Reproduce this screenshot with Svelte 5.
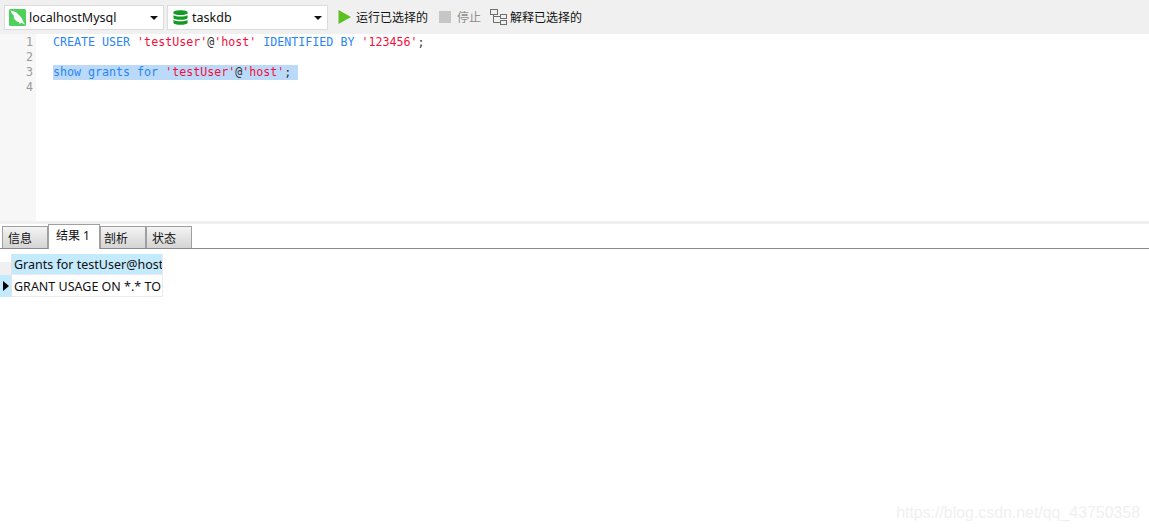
<script lang="ts">
  const tabs = ['信息', '结果 1', '剖析', '状态'];
  const activeTab = 1;
  const lineNumbers = [1, 2, 3, 4];
</script>

<div class="app">
  <div class="toolbar">
    <div class="select conn">
      <svg class="ico" viewBox="0 0 16 16" width="17" height="17">
        <rect x="0" y="0" width="16" height="16" rx="1.5" fill="#4fd05a" />
        <path d="M1.5 1.5 C4.5 2 7 3 8.5 5 C10.5 6.5 12.5 9 13 11 L15 14.5 L11.5 13 L10 14 L9.5 12.5 C7.5 12 6 11 5.2 9.5 C4.5 8.3 4.3 7 4.6 6 C3.2 5 2 3.5 1.5 1.5 Z" fill="#fff" />
      </svg>
      <span class="label">localhostMysql</span>
      <span class="arrow"></span>
    </div>
    <div class="select db">
      <svg class="ico" viewBox="0 0 16 17" width="15" height="17">
        <path d="M0.5 3 C0.5 0 15.5 0 15.5 3 L15.5 4 C15.5 6.6 0.5 6.6 0.5 4 Z" fill="#129a23" />
        <path d="M0.5 6.2 C3 8 13 8 15.5 6.2 L15.5 9 C15.5 11.6 0.5 11.6 0.5 9 Z" fill="#129a23" />
        <path d="M0.5 11.2 C3 13 13 13 15.5 11.2 L15.5 14 C15.5 17 0.5 17 0.5 14 Z" fill="#129a23" />
      </svg>
      <span class="label">taskdb</span>
      <span class="arrow"></span>
    </div>
    <div class="tool run">
      <svg viewBox="0 0 14 14" width="14" height="14"><path d="M0.5 0 L13 7 L0.5 14 Z" fill="#5cc022" /></svg>
      <span>运行已选择的</span>
    </div>
    <div class="tool stop">
      <span class="stop-box"></span>
      <span>停止</span>
    </div>
    <div class="tool explain">
      <svg viewBox="0 0 17 16" width="17" height="16" fill="none" stroke="#6e6e6e">
        <rect x="0.5" y="0.5" width="7" height="5" />
        <rect x="10.5" y="5.5" width="6" height="4" />
        <rect x="10.5" y="11.5" width="6" height="4" />
        <path d="M3.5 5.5 V13.5 H10.5 M3.5 7.5 H10.5" />
      </svg>
      <span>解释已选择的</span>
    </div>
  </div>

  <div class="editor">
    <div class="gutter">
      {#each lineNumbers as n}
        <div class="num">{n}</div>
      {/each}
    </div>
    <div class="code">
      <div class="line"><span class="kw">CREATE USER</span> <span class="str">'testUser'</span>@<span class="str">'host'</span> <span class="kw">IDENTIFIED BY</span> <span class="str">'123456'</span>;</div>
      <div class="line"></div>
      <div class="line"><span class="sel"><span class="kw">show grants for</span> <span class="str">'testUser'</span>@<span class="str">'host'</span>;{' '}</span></div>
      <div class="line"></div>
    </div>
  </div>

  <div class="splitter"></div>

  <div class="tabs">
    {#each tabs as t, i}
      <div class="tab" class:active={i === activeTab}>{t}</div>
    {/each}
  </div>

  <div class="results">
    <div class="row head">
      <div class="indicator"></div>
      <div class="cell">Grants for testUser@host</div>
    </div>
    <div class="row body">
      <div class="indicator"><span class="pointer"></span></div>
      <div class="cell">GRANT USAGE ON *.* TO</div>
    </div>
  </div>

  <div class="watermark">https://blog.csdn.net/qq_43750358</div>
</div>

<style>
  :global(body) {
    margin: 0;
    background: #fff;
  }

  .app {
    position: relative;
    width: 1149px;
    height: 531px;
    overflow: hidden;
    font-family: "Noto Sans", "Noto Sans CJK SC", sans-serif;
    font-size: 12.5px;
    color: #111;
  }

  .toolbar {
    display: flex;
    align-items: center;
    height: 34px;
    padding-left: 4px;
    box-sizing: border-box;
    background: #f0f0f0;
  }

  .select {
    display: flex;
    align-items: center;
    box-sizing: border-box;
    height: 25px;
    padding: 0 5px 0 4px;
    gap: 3px;
    background: #fff;
    border: 1px solid #dcdcdc;
  }
  .conn { width: 160px; margin-right: 3px; }
  .db { width: 161px; margin-right: 10px; padding-left: 5px; gap: 4px; }
  .label { flex: 1; }
  .ico { flex: none; }

  .arrow {
    width: 0;
    height: 0;
    border-left: 4px solid transparent;
    border-right: 4px solid transparent;
    border-top: 4px solid #111;
    margin-top: 2px;
  }

  .tool {
    display: flex;
    align-items: center;
    gap: 4px;
    font-size: 12px;
  }
  .run { margin-right: 11px; }
  .stop { margin-right: 9px; color: #8c8c8c; gap: 6px; }
  .explain { gap: 3px; }

  .stop-box {
    width: 12px;
    height: 12px;
    background: #c6c6c6;
  }

  .editor {
    display: flex;
    height: 187px;
    font-family: "DejaVu Sans Mono", monospace;
    font-size: 11.65px;
    line-height: 15px;
    background: #fff;
  }

  .gutter {
    width: 36px;
    box-sizing: border-box;
    padding: 1px 3px 0 0;
    background: #f7f7f7;
    color: #9a9a9a;
    text-align: right;
  }
  .num { height: 15px; }

  .code {
    padding: 1px 0 0 17px;
    color: #333;
  }
  .line { height: 15px; white-space: pre; }
  .kw { color: #2a86f5; }
  .str { color: #f5103c; }
  .sel { background: #bbdafa; display: inline-block; height: 15px; }

  .splitter {
    height: 3px;
    background: #f0f0f0;
  }

  .tabs {
    display: flex;
    align-items: flex-end;
    height: 25px;
    box-sizing: border-box;
    padding-left: 2px;
    border-bottom: 1px solid #8a8a8a;
  }

  .tab {
    box-sizing: border-box;
    width: 46px;
    height: 22px;
    padding: 3px 0 0 5px;
    border: 1px solid #a0a0a0;
    border-bottom: 0;
    background: linear-gradient(#f4f4f4, #d4d4d4);
    font-size: 12px;
    line-height: 17px;
  }
  .tab:nth-child(3) { padding-left: 3px; }
  .tab.active {
    width: 52px;
    height: 25px;
    margin-bottom: -1px;
    padding: 2px 0 0 7px;
    background: #fff;
    position: relative;
  }

  .results {
    margin-top: 5px;
    width: 163px;
    overflow: hidden;
  }

  .row {
    display: flex;
    height: 22px;
  }
  .head { height: 21px; }
  .indicator {
    flex: none;
    width: 12px;
    display: flex;
    align-items: center;
    box-sizing: border-box;
    border-right: 1px solid #e4e4e4;
  }
  .head .indicator { background: linear-gradient(#fff 8px, #f0f0f0 8px); }
  .body .indicator { background: #c4eafd; }

  .pointer {
    width: 0;
    height: 0;
    margin-left: 3px;
    border-top: 5.5px solid transparent;
    border-bottom: 5.5px solid transparent;
    border-left: 6px solid #000;
  }

  .cell {
    flex: 1;
    min-width: 0;
    padding-left: 2px;
    white-space: nowrap;
    overflow: hidden;
    line-height: 21px;
    border-right: 1px solid #eaeaea;
    border-bottom: 1px solid #eaeaea;
  }
  .body .cell { line-height: 23px; }
  .head .cell { background: #c4eafd; }

  .watermark {
    position: absolute;
    right: 9px;
    bottom: 9px;
    font-family: "Liberation Sans", sans-serif;
    font-size: 15.9px;
    color: #f0f0f0;
  }
</style>
